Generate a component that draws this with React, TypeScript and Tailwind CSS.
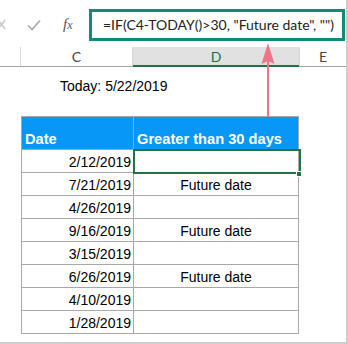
import React from "react";

const dates = [
  ["2/12/2019", ""],
  ["7/21/2019", "Future date"],
  ["4/26/2019", ""],
  ["9/16/2019", "Future date"],
  ["3/15/2019", ""],
  ["6/26/2019", "Future date"],
  ["4/10/2019", ""],
  ["1/28/2019", ""],
];

export default function App() {
  return (
    <div className="w-[348px] h-[344px] bg-[#cdcdcd] overflow-hidden font-['Liberation_Sans',Arial,sans-serif]">
      <div className="relative w-[346px] h-[342px] bg-white flex flex-col">
        {/* toolbar row */}
        <div className="h-[47px] flex items-start">
          <div className="w-[89px] h-[47px] flex items-center">
            <svg width="8" height="12" viewBox="0 0 8 12" className="ml-0 mt-[2px]">
              <path d="M-2 1 L5 10 M5 1 L-2 10" stroke="#c8c8c8" strokeWidth="1.6" fill="none" />
            </svg>
            <svg width="14" height="12" viewBox="0 0 14 12" className="ml-[19px] mt-[2px]">
              <path d="M1 6.5 L5 10.5 L13 1.5" stroke="#a9a9a9" strokeWidth="1.7" fill="none" />
            </svg>
            <span className="ml-[22px] mt-[1px] text-[15px] italic text-[#555] font-['Liberation_Serif',serif] leading-none">
              f<span className="text-[12px]">x</span>
            </span>
          </div>
          <div className="mt-[9px] w-[256px] h-[32px] border-[3px] border-[#128a78] bg-white flex items-center pl-[11px]">
            <span className="text-[14px] text-[#222] font-['Lato',sans-serif] whitespace-nowrap leading-none">
              =IF(C4-TODAY()&gt;30, "Future date", "")
            </span>
          </div>
        </div>
        {/* column header row */}
        <div className="h-[20px] flex border-b border-[#a5a5a5] text-[14px] text-[#444] font-['Lato',sans-serif]">
          <div className="w-[21px] border-r border-[#d6d6d6]" />
          <div className="w-[112px] border-r border-[#d6d6d6] flex items-center justify-center">C</div>
          <div className="w-[166px] bg-[#e1e1e1] border-b-2 border-[#217346] flex items-center justify-center text-[#1f6e44] -mb-[1px]">D</div>
          <div className="w-[47px] border-l border-[#d6d6d6] flex items-center justify-center">E</div>
        </div>
        {/* today */}
        <div className="h-[49px] pl-[60px] pt-[12px] text-[14px] text-black leading-none">Today: 5/22/2019</div>
        {/* table */}
        <div className="relative ml-[21px] w-[278px] grid grid-cols-[112px_165px] border-l border-t border-[#a8a8a8] text-[14px] text-black">
          <div className="h-[33px] bg-[#0697f7] border-r border-b border-[#a8a8a8] flex items-end pl-[3px] pb-[1px] text-white font-bold text-[14.67px] leading-[17px]">Date</div>
          <div className="h-[33px] bg-[#0697f7] border-r border-b border-[#a8a8a8] flex items-end pl-[3px] pb-[1px] text-white font-bold text-[14.67px] leading-[17px]">Greater than 30 days</div>
          {dates.map(([d, f], i) => (
            <React.Fragment key={i}>
              <div className="h-[23px] border-r border-b border-[#a8a8a8] flex items-end justify-end pr-[2px] pb-[1px] leading-[17px]">{d}</div>
              <div className="h-[23px] border-r border-b border-[#a8a8a8] flex items-end justify-center pb-[1px] leading-[17px]">{f}</div>
            </React.Fragment>
          ))}
          <div className="absolute left-[111px] top-[32px] w-[168px] h-[25px] border-2 border-[#217346]" />
          <div className="absolute left-[274px] top-[54px] w-[6px] h-[6px] bg-[#217346] border border-white" />
        </div>
        {/* arrow */}
        <svg className="absolute left-[258px] top-[42px]" width="20" height="76" viewBox="0 0 20 76">
          <path d="M10 1 L16.5 22 L10 19 L3.5 22 Z" fill="#ee7486" />
          <line x1="10" y1="18" x2="10" y2="75" stroke="#ee7486" strokeWidth="2" />
        </svg>
      </div>
    </div>
  );
}
